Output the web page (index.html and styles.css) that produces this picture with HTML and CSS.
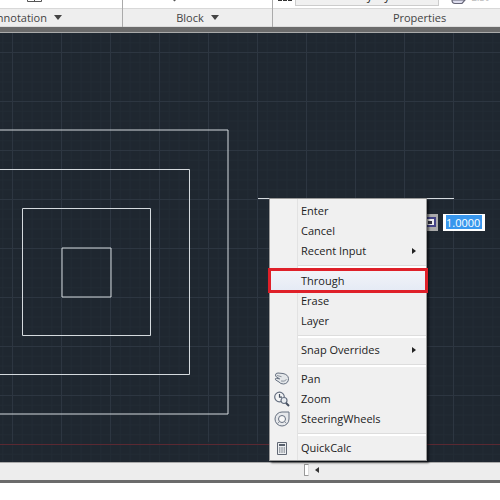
FILE: index.html
```html
<!DOCTYPE html>
<html lang="en">
<head>
<meta charset="utf-8">
<title>Drawing</title>
<link rel="stylesheet" href="styles.css">
</head>
<body>
<header class="ribbon">
  <section class="panel panel-annotation">
    <div class="panel-body">
      <svg class="table-icon" width="60" height="8" viewBox="0 0 60 8"><path d="M.5 0v1.500h14V0M7.500 0v1" fill="none" stroke="#555"/></svg>
    </div>
    <button class="panel-title" type="button"><span>Annotation</span><i class="caret"></i></button>
  </section>
  <section class="panel panel-block">
    <div class="panel-body">
      <svg class="block-icon" width="60" height="8" viewBox="0 0 60 8"><path d="M0 0h3l-1.500 1.500z" fill="#555"/></svg>
    </div>
    <button class="panel-title" type="button"><span>Block</span><i class="caret"></i></button>
  </section>
  <section class="panel panel-properties">
    <div class="panel-body">
      <svg class="weight-icon" width="17" height="8" viewBox="0 0 17 8"><path d="M1 0h4M6 0h4M11 0h4" fill="none" stroke="#333" stroke-width="2"/></svg>
      <button class="layer-choice" type="button">ByLayer</button>
      <svg class="list-icon" width="16" height="8" viewBox="0 0 16 8"><path d="M1 0q0 3.500 3 3.500h7l3-3.500z" fill="#dde" stroke="#667" stroke-width="1.200"/></svg>
      <span class="list-label">List</span>
    </div>
    <div class="panel-title"><span>Properties</span></div>
  </section>
</header>

<main class="canvas">
  <svg class="drawing" width="100%" height="100%">
    <defs>
      <pattern id="minor" width="9.800" height="9.800" patternUnits="userSpaceOnUse" x="12" y="19"><path d="M.5 0v9.800M0 .5h9.800" stroke="#222b34" fill="none"/></pattern>
      <pattern id="major" width="49" height="49" patternUnits="userSpaceOnUse" x="12" y="19"><path d="M.5 0v49M0 .5h49" stroke="#2d3641" fill="none"/></pattern>
    </defs>
    <rect width="100%" height="100%" fill="url(#minor)"/>
    <rect width="100%" height="409" fill="url(#major)"/>
    <path d="M0 411.500h2000" stroke="#5a2932"/>
    <g fill="none" stroke="#d5dade">
      <path d="M-1 97h229v284H-1"/>
      <path d="M-1 136.500h190.500v205H-1"/>
      <path d="M22.500 175.500h128v127h-128z"/>
      <path d="M62 215h49v49H62z"/>
      <path d="M258 165.500h196"/>
    </g>
  </svg>
  <div class="offset-entry">
    <span class="lock"><svg width="14" height="16" viewBox="0 0 14 16"><path d="M0 4h9v8H0" fill="#eee" stroke="#448" stroke-width="2"/><path d="M2 7h4v3H2z" fill="#334"/></svg></span>
    <input class="offset-value" type="text" value="1.0000" aria-label="Offset distance">
  </div>
  <ul class="menu">
    <li><button type="button">Enter</button></li>
    <li><button type="button">Cancel</button></li>
    <li><button type="button">Recent Input<i class="arrow"></i></button></li>
    <li class="separator"></li>
    <li><button type="button" class="current">Through</button></li>
    <li><button type="button">Erase</button></li>
    <li><button type="button">Layer</button></li>
    <li class="separator"></li>
    <li><button type="button">Snap Overrides<i class="arrow"></i></button></li>
    <li class="separator"></li>
    <li><button type="button"><svg class="icon" viewBox="0 0 16 16"><path d="M1.500 4q0-2 2.500-2l5 .5q5 1 5.500 5 0 5-5 5.500-3 0-4.500-2L1.500 8.800q-.8-1.600 1.200-1.500l3 .6L2.500 6q-1-.8-1-2z" fill="#e3e6e9" stroke="#667080"/><path d="M3 4.500l4.500 1.200M7 10q3.500 1 5.500-1.500" fill="none" stroke="#8a929c"/></svg>Pan</button></li>
    <li><button type="button"><svg class="icon" viewBox="0 0 16 16"><circle cx="5.500" cy="6" r="4.800" fill="#f3f4f5" stroke="#667080" stroke-width="1.200"/><path d="M5.500 3v3.200H8" fill="none" stroke="#465060" stroke-width="1.200"/><circle cx="10" cy="9.500" r="3" fill="#e9edf1" stroke="#667080" stroke-width="1.200"/><path d="M12 12l3 3" stroke="#465060" stroke-width="2"/></svg>Zoom</button></li>
    <li><button type="button"><svg class="icon" viewBox="0 0 16 16"><path d="M8 1h7v7a7 7 0 1 1-7-7z" fill="#e6e8eb" stroke="#667080"/><circle cx="8" cy="8" r="3.500" fill="#f7f7f7" stroke="#667080"/><path d="M5.500 10.500l-2 2M10.500 10.500l2 2" stroke="#8a929c"/></svg>SteeringWheels</button></li>
    <li class="separator"></li>
    <li><button type="button"><svg class="icon" viewBox="0 0 16 16"><path d="M3.500 2.500h9v12h-9z" fill="#eceef0" stroke="#626975"/><path d="M5 5h6" stroke="#59616d" stroke-width="2"/><path d="M5 8h6M5 10h6M5 12h6" stroke="#59616d" stroke-width="1.200" stroke-dasharray="1.400 .9"/></svg>QuickCalc</button></li>
  </ul>
</main>

<footer class="scroll-strip">
  <span class="grip"></span>
  <button class="scroll-left" type="button" aria-label="Scroll left"></button>
</footer>
</body>
</html>
```
FILE: styles.css
```css
* {
  box-sizing: border-box;
}

body {
  margin: 0;
  background: #fff;
  color: #222;
  font: 11px/16px "Open Sans", "Noto Sans", sans-serif;
}

button {
  margin: 0;
  padding: 0;
  border: 0;
  background: none;
  color: inherit;
  font: inherit;
}

.ribbon {
  display: grid;
  grid-template-columns: 122px 150px 1fr;
  border-bottom: 5px solid #6b6b6b;
  background: #eee;
}

.panel {
  min-width: 0;
}

.panel + .panel {
  border-left: 1px solid #aaa;
}

.panel-body {
  display: flex;
  align-items: flex-end;
  height: 9px;
  overflow: hidden;
  border-bottom: 1px solid #d8d8d8;
  background: #fff;
}

.panel-title {
  display: flex;
  align-items: center;
  justify-content: center;
  gap: 7px;
  width: 100%;
  height: 18px;
  border-bottom: 1px solid #ddd;
  color: #444;
}

.panel-annotation .panel-title {
  justify-content: flex-end;
  padding-right: 60px;
}

.panel-properties .panel-title {
  padding-left: 66px;
}

.caret {
  border: 4px solid transparent;
  border-top: 5px solid #444;
  border-bottom: 0;
}

.table-icon {
  margin-left: 27px;
}

.block-icon {
  margin-left: 50px;
}

.weight-icon {
  margin-left: 4px;
}

.layer-choice {
  width: 144px;
  height: 20px;
  margin: 0 12px 2px 1px;
  padding-left: 26px;
  border: 1px solid #ccc;
  background: #f0f0f0;
  line-height: 12px;
}

.list-icon {
  margin-right: 4px;
}

.list-label {
  margin-bottom: 3px;
  color: #bbb;
}

.panel-properties .panel-body > * {
  flex-shrink: 0;
}

.canvas {
  position: relative;
  height: 430px;
  border-top: 1px solid #aaa;
  background: #1f2730;
}

.drawing {
  display: block;
}

.menu {
  position: absolute;
  top: 165px;
  left: 269px;
  width: 158px;
  margin: 0;
  padding: 2px 0;
  border: 1px solid #999;
  background: linear-gradient(to right, #f1f1f1 27px, #e2e2e2 27px, #e2e2e2 28px, #f0f0f0 28px);
  box-shadow: 2px 2px 2px #0008;
  list-style: none;
}

.menu button {
  display: flex;
  position: relative;
  align-items: center;
  width: 100%;
  height: 20px;
  padding-left: 31px;
  text-align: left;
}

.menu .current {
  height: 21px;
  background: linear-gradient(#f2f4f8, #e5eaf5);
  outline: 3px solid #df2029;
  outline-offset: -1px;
}

.separator {
  height: 9px;
  margin-left: 28px;
  padding-top: 4px;
}

.separator::before {
  display: block;
  height: 2px;
  border-top: 1px solid #ddd;
  background: #fff;
  content: "";
}

.icon {
  position: absolute;
  left: 4px;
  width: 16px;
  height: 16px;
}

.arrow {
  margin: 0 10px 0 auto;
  border: 3px solid transparent;
  border-right: 0;
  border-left: 4px solid #222;
}

.offset-entry {
  display: flex;
  position: absolute;
  top: 181px;
  left: 426px;
  gap: 5px;
}

.lock {
  width: 12px;
  height: 17px;
  background: #aaa;
}

.lock svg {
  display: block;
}

.offset-value {
  width: 42px;
  height: 17px;
  padding: 0 3px;
  border: 0;
  background: linear-gradient(#3997ed, #3997ed) 3px 1px / 36px 14px no-repeat #fff;
  color: #fff;
  font: inherit;
}

.scroll-strip {
  display: flex;
  align-items: center;
  height: 21px;
  padding: 0 0 4px 304px;
  border-top: 1px solid #aaa;
  border-bottom: 3px solid #6b6b6b;
  background: #ededed;
}

.grip {
  width: 5px;
  height: 12px;
  border: 1px solid #999;
  border-right-color: #ddd;
  border-radius: 1px;
  background: #fff;
}

.scroll-left {
  margin-left: 6px;
  border: 3px solid transparent;
  border-right: 4px solid #333;
  border-left: 0;
}
```
